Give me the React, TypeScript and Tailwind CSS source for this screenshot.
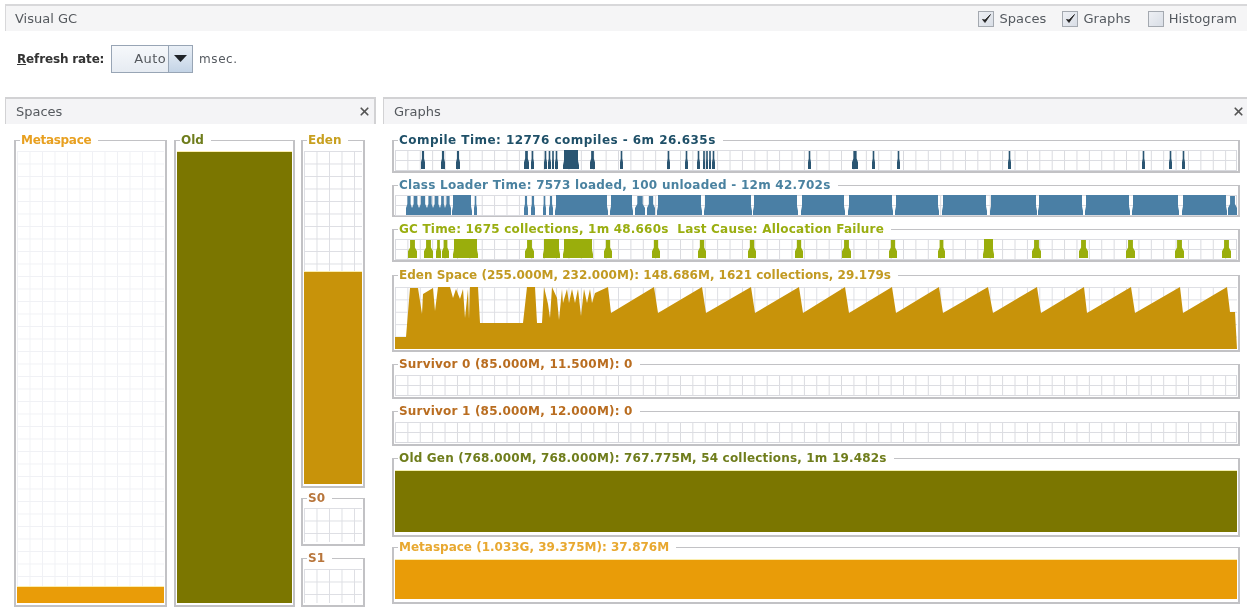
import React from 'react';
import { X } from 'lucide-react';

const font = "font-['DejaVu_Sans',sans-serif]";
const faintGrid = "bg-[linear-gradient(#f0f1f5_1px,transparent_1px),linear-gradient(90deg,#f0f1f5_1px,transparent_1px)] bg-[size:12.5px_12.5px]";
const sideGrid = "bg-[linear-gradient(#dddee3_1px,transparent_1px),linear-gradient(90deg,#dddee3_1px,transparent_1px)] bg-[size:12.5px_12.5px]";
const graphGrid = "border-r border-b border-[#d8d9de] bg-[linear-gradient(#dcdde2_1px,transparent_1px),linear-gradient(90deg,#d8d9de_1px,transparent_1px)] bg-[size:12.4px_10px]";
const edenGrid = "bg-[linear-gradient(#dddee3_1px,transparent_1px),linear-gradient(90deg,#dddee3_1px,transparent_1px)] bg-[size:12.4px_12.4px]";

// bars are [left, right] in page px, the chart starts at x=395
const compileBars = [[421, 425], [441, 445], [456, 460], [524, 529], [531, 534], [544, 547], [548, 551], [552, 554], [555, 558], [563, 579], [590, 595], [620, 623], [667, 670], [685, 688], [697, 700], [703, 705], [706, 708], [709, 711], [712, 715], [808, 811], [852, 858], [872, 875], [897, 900], [1008, 1011], [1142, 1145], [1169, 1172], [1182, 1185]];
const classBars = [[406, 412], [412, 419], [419, 427], [427, 433], [433, 440], [440, 445], [445, 451], [452, 472], [474, 477], [524, 528], [531, 535], [543, 546], [549, 553], [555, 608], [610, 633], [635, 645], [647, 655], [657, 702], [704, 752], [753, 798], [801, 845], [848, 893], [895, 939], [942, 987], [990, 1037], [1038, 1083], [1085, 1130], [1132, 1179], [1182, 1227], [1228, 1237]];
const gcBars = [[408, 417], [424, 433], [436, 441], [442, 449], [453, 478], [525, 534], [543, 560], [563, 593], [604, 612], [652, 660], [698, 706], [748, 756], [795, 803], [842, 851], [889, 897], [938, 945], [983, 994], [1032, 1041], [1079, 1088], [1126, 1135], [1175, 1184], [1222, 1231]];

// eden outline as read off the reference, in page px
const edenPoints = [[395, 336], [406, 336], [410, 287], [418, 287], [422, 313], [423, 293], [433, 287], [435, 310], [438, 286], [450, 286], [453, 297], [456, 288], [460, 298], [463, 288], [465, 317], [468, 288], [469, 318], [470, 286], [478, 286], [480, 322], [523, 322], [527, 286], [535, 286], [537, 322], [542, 322], [544, 286], [548, 303], [550, 317], [552, 286], [557, 297], [559, 319], [562, 288], [563, 302], [567, 288], [569, 302], [572, 288], [575, 302], [578, 288], [581, 315], [584, 288], [587, 302], [590, 288], [592, 302], [595, 292], [608, 286], [611, 312], [654, 286], [658, 312], [702, 286], [706, 312], [751, 286], [755, 312], [799, 286], [803, 312], [845, 286], [849, 312], [892, 286], [896, 312], [939, 286], [943, 312], [988, 286], [993, 312], [1037, 286], [1041, 312], [1084, 286], [1087, 312], [1131, 286], [1135, 312], [1180, 286], [1183, 312], [1227, 286], [1230, 311], [1235, 311], [1237, 348], [395, 348]];

function barPath([left, right]: number[], h: number) {
  const l = left - 395;
  const r = right - 395;
  const w = r - l;
  if (w <= 10) {
    const neck = Math.max(0.8, w * 0.27);
    const c = (l + r) / 2;
    return `M${c - neck} 1H${c + neck}V${h * 0.45}L${r} ${h * 0.65}V${h}H${l}V${h * 0.65}L${c - neck} ${h * 0.45}Z`;
  }
  return `M${l + 1} 0H${r - 1}V${h * 0.55}L${r} ${h * 0.8}V${h}H${l}V${h * 0.8}L${l + 1} ${h * 0.55}Z`;
}

function BarChart({ bars, color, height }: { bars: number[][]; color: string; height: number }) {
  return (
    <svg width={842} height={height} className="block">
      {bars.map((b, i) => (
        <path key={i} d={barPath(b, height)} fill={color} />
      ))}
    </svg>
  );
}

function Group({ title, titleClass, className, children }: { title: string; titleClass: string; className: string; children?: React.ReactNode }) {
  return (
    <fieldset className={`min-w-0 border-x-2 border-b-2 border-t border-[#c2c2c5] ${className}`}>
      <legend className={`ml-[4px] pl-[1px] pr-[7px] text-[12px] leading-[14px] font-bold whitespace-pre ${titleClass}`}>{title}</legend>
      {children}
    </fieldset>
  );
}

function Gauge({ fillClass, className }: { fillClass?: string; className: string }) {
  return (
    <div className={`flex flex-col justify-end ${className}`}>
      {fillClass && <div className={`border-t border-[#fbeeb0] ${fillClass}`} />}
    </div>
  );
}

function Check({ checked, label, className }: { checked: boolean; label: string; className: string }) {
  return (
    <div className={`flex items-center ${className}`}>
      <div className="flex h-[16px] w-[16px] items-center justify-center border border-[#a4a9b0] bg-gradient-to-br from-[#eef0f4] to-[#d9dee6]">
        {checked && (
          <svg width="11" height="11" viewBox="0 0 11 11">
            <path d="M1.5 6.5 L4 9.5 L9.5 1.5 L4 7 Z" fill="#222" stroke="#222" strokeWidth="0.8" strokeLinejoin="round" />
          </svg>
        )}
      </div>
      <span className="ml-[5px] text-[13px] tracking-[0.1px] text-[#555a60]">{label}</span>
    </div>
  );
}

function PanelTab({ title, className, closeClass }: { title: string; className: string; closeClass: string }) {
  return (
    <div className={`flex h-[27px] items-center border-t-2 border-l border-[#d2d2d4] bg-[#f4f4f6] pl-[10px] text-[13px] text-[#55595e] ${className}`}>
      <span className="flex-1">{title}</span>
      <X size={13} strokeWidth={3.2} className={`text-[#555] ${closeClass}`} />
    </div>
  );
}

export default function App() {
  return (
    <div className={`flex h-[612px] w-[1247px] flex-col overflow-hidden bg-white pt-[4px] blur-[0.35px] ${font}`}>
      {/* title bar */}
      <div className="ml-[5px] flex h-[27px] items-center border-t-2 border-l border-[#d8d8da] bg-[#f5f5f6] pl-[9px] text-[13px] text-[#55595e]">
        <span className="flex-1">Visual GC</span>
        <Check checked label="Spaces" className="" />
        <Check checked label="Graphs" className="ml-[16px]" />
        <Check checked={false} label="Histogram" className="ml-[17px] mr-[10px]" />
      </div>

      {/* refresh rate */}
      <div className="mt-[14px] ml-[17px] flex h-[27px] items-center">
        <span className="w-[94px] text-[12px] font-bold tracking-[-0.15px] text-[#333]">
          <span className="underline">R</span>efresh rate:
        </span>
        <div className="flex h-[28px] w-[82px] border border-[#98a5b5] bg-gradient-to-b from-[#f6f8fb] to-[#e6ebf2]">
          <span className="w-[56px] self-center pr-[2px] text-right text-[13px] tracking-[0.4px] text-[#55595e]">Auto</span>
          <div className="flex flex-1 items-center justify-center border-l border-[#98a5b5] bg-gradient-to-b from-[#e9eff6] to-[#c4d4e6]">
            <svg width="13" height="7" viewBox="0 0 13 7">
              <path d="M0 0H13L6.5 7Z" fill="#1f2328" />
            </svg>
          </div>
        </div>
        <span className="ml-[6px] text-[12px] tracking-[0.6px] text-[#555a60]">msec.</span>
      </div>

      {/* panels */}
      <div className="mt-[25px] ml-[5px] flex">
        <div className="w-[371px]">
          <PanelTab title="Spaces" className="border-r-2" closeClass="mr-[3px]" />
          <div className="mt-[9px] ml-[9px] flex">
            <Group title="Metaspace" titleClass="tracking-[-0.3px] text-[#e8a020]" className="h-[474px] w-[153px]">
              <Gauge fillClass="h-[17px] bg-[#e99c08]" className={`mx-px mt-[4px] h-[452px] ${faintGrid}`} />
            </Group>
            <Group title="Old" titleClass="text-[#6f7d1c]" className="ml-[7px] h-[474px] w-[121px]">
              <Gauge fillClass="h-[452px] bg-[#7b7600]" className="mx-px mt-[4px] h-[452px]" />
            </Group>
            <div className="ml-[6px] w-[64px]">
              <Group title="Eden" titleClass="text-[#c8a020]" className="h-[355px]">
                <Gauge fillClass="h-[213px] bg-[#c8930a]" className={`mx-px mt-[4px] h-[333px] ${sideGrid}`} />
              </Group>
              <Group title="S0" titleClass="text-[#b8763c]" className="mt-[3px] h-[55px]">
                <Gauge className={`mx-px mt-[3px] h-[34px] ${sideGrid}`} />
              </Group>
              <Group title="S1" titleClass="text-[#b8763c]" className="mt-[5px] h-[56px]">
                <Gauge className={`mx-px mt-[4px] h-[34px] ${sideGrid}`} />
              </Group>
            </div>
          </div>
        </div>

        <div className="ml-[7px] flex-1">
          <PanelTab title="Graphs" className="" closeClass="mr-[2px]" />
          <div className="mt-[9px] ml-[9px] w-[848px]">
            <Group title="Compile Time: 12776 compiles - 6m 26.635s" titleClass="tracking-[0.45px] text-[#1f5068]" className="h-[40px]">
              <div className={`mx-px mt-[3px] h-[21px] ${graphGrid}`}>
                <BarChart bars={compileBars} color="#2a5572" height={19} />
              </div>
            </Group>
            <Group title="Class Loader Time: 7573 loaded, 100 unloaded - 12m 42.702s" titleClass="tracking-[0.26px] text-[#4a82a0]" className="mt-[5px] h-[39px]">
              <div className={`mx-px mt-[3px] h-[21px] ${graphGrid}`}>
                <BarChart bars={classBars} color="#4a7fa5" height={20} />
              </div>
            </Group>
            <Group title="GC Time: 1675 collections, 1m 48.660s  Last Cause: Allocation Failure" titleClass="tracking-[0.2px] text-[#9aae10]" className="mt-[5px] h-[40px]">
              <div className={`mx-px mt-[3px] h-[21px] ${graphGrid}`}>
                <BarChart bars={gcBars} color="#9aae0c" height={19} />
              </div>
            </Group>
            <Group title="Eden Space (255.000M, 232.000M): 148.686M, 1621 collections, 29.179s" titleClass="text-[#c29a22]" className="mt-[6px] h-[84px]">
              <div className={`mx-px mt-[5px] h-[62px] ${edenGrid}`}>
                <svg width={842} height={62} className="block">
                  <polygon points={edenPoints.map(([x, y]) => `${x - 395},${y - 286}`).join(' ')} fill="#c8930a" />
                </svg>
              </div>
            </Group>
            <Group title="Survivor 0 (85.000M, 11.500M): 0" titleClass="tracking-[0.2px] text-[#b96d20]" className="mt-[5px] h-[42px]">
              <div className={`mx-px mt-[4px] h-[21px] ${graphGrid}`} />
            </Group>
            <Group title="Survivor 1 (85.000M, 12.000M): 0" titleClass="tracking-[0.2px] text-[#b96d20]" className="mt-[5px] h-[42px]">
              <div className={`mx-px mt-[4px] h-[21px] ${graphGrid}`} />
            </Group>
            <Group title="Old Gen (768.000M, 768.000M): 767.775M, 54 collections, 1m 19.482s" titleClass="tracking-[0.18px] text-[#6f7d1c]" className="mt-[5px] h-[86px]">
              <div className="mx-px mt-[5px] h-[62px] border-t border-[#f3efb0] bg-[#7b7600]" />
            </Group>
            <Group title="Metaspace (1.033G, 39.375M): 37.876M" titleClass="text-[#e8a830]" className="mt-[3px] h-[64px]">
              <div className="mx-px mt-[5px] h-[40px] border-t border-[#fbeeb0] bg-[#e99c08]" />
            </Group>
          </div>
        </div>
      </div>
    </div>
  );
}
